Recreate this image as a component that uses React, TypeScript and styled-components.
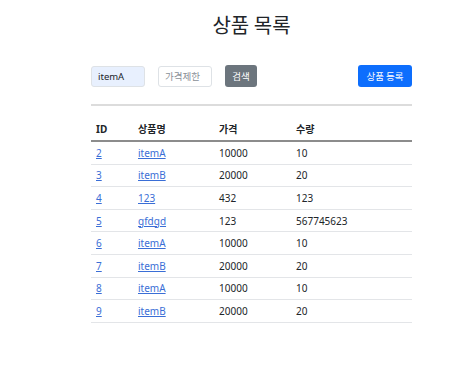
import React from "react";
import styled, { createGlobalStyle } from "styled-components";

const GlobalStyle = createGlobalStyle`
  body {
    margin: 0;
    background: #ffffff;
    font-family: "Noto Sans", "Noto Sans CJK KR", sans-serif;
    color: #212529;
  }
`;

const Page = styled.div`
  width: 321px;
  margin-left: 91px;
  padding-top: 8px;
`;

const Title = styled.h2`
  margin: 0;
  height: 34px;
  line-height: 34px;
  text-align: center;
  font-size: 20px;
  font-weight: 400;
  font-family: "Noto Sans CJK KR", sans-serif;
`;

const SearchBar = styled.form`
  display: flex;
  align-items: center;
  margin-top: 23px;
  height: 22px;
`;

const Field = styled.input<{ $filled?: boolean }>`
  box-sizing: border-box;
  width: 54px;
  height: 21px;
  margin-right: 13px;
  padding: 0 6px;
  border: 1px solid #dee2e6;
  border-radius: 3px;
  background: ${(p) => (p.$filled ? "#e8f0fe" : "#ffffff")};
  font-family: "Noto Sans", "Noto Sans CJK KR", sans-serif;
  font-size: 9.5px;
  color: #212529;
  outline: none;

  &::placeholder {
    color: #8a9097;
  }
`;

const Button = styled.button<{ $variant: "secondary" | "primary" }>`
  box-sizing: border-box;
  height: 22px;
  width: ${(p) => (p.$variant === "primary" ? "54px" : "32px")};
  padding: 0;
  border: none;
  border-radius: 3px;
  background: ${(p) => (p.$variant === "primary" ? "#0d6efd" : "#6c757d")};
  color: #ffffff;
  font-family: "Noto Sans CJK KR", sans-serif;
  font-size: 9.5px;
  margin-left: ${(p) => (p.$variant === "primary" ? "auto" : "0")};
`;

const Divider = styled.hr`
  margin: 17px 0 0;
  border: none;
  border-top: 2px solid #dcdcdc;
`;

const Table = styled.table`
  width: 100%;
  margin-top: 11px;
  border-collapse: collapse;
  table-layout: fixed;
  font-size: 10px;
`;

const Head = styled.th<{ $w: number }>`
  box-sizing: border-box;
  width: ${(p) => p.$w}px;
  height: 24px;
  padding: 0 5px;
  text-align: left;
  font-weight: 700;
  font-family: "Noto Sans", "Noto Sans CJK KR", sans-serif;
  border-bottom: 2px solid #8c8c8c;
`;

const Cell = styled.td`
  height: 21.6px;
  padding: 0 5px;
  border-bottom: 1px solid #e3e5e8;
`;

const ItemLink = styled.a`
  color: #3a6ed6;
  text-decoration: underline;
`;

const items = [
  { id: 2, name: "itemA", price: 10000, qty: 10 },
  { id: 3, name: "itemB", price: 20000, qty: 20 },
  { id: 4, name: "123", price: 432, qty: 123 },
  { id: 5, name: "gfdgd", price: 123, qty: 567745623 },
  { id: 6, name: "itemA", price: 10000, qty: 10 },
  { id: 7, name: "itemB", price: 20000, qty: 20 },
  { id: 8, name: "itemA", price: 10000, qty: 10 },
  { id: 9, name: "itemB", price: 20000, qty: 20 },
];

const App = () => {
  return (
    <>
      <GlobalStyle />
      <Page>
        <Title>상품 목록</Title>
        <SearchBar onSubmit={(e) => e.preventDefault()}>
          <Field $filled defaultValue="itemA" />
          <Field placeholder="가격제한" />
          <Button $variant="secondary" type="submit">
            검색
          </Button>
          <Button $variant="primary" type="button">
            상품 등록
          </Button>
        </SearchBar>
        <Divider />
        <Table>
          <thead>
            <tr>
              <Head $w={42}>ID</Head>
              <Head $w={81}>상품명</Head>
              <Head $w={77}>가격</Head>
              <Head $w={121}>수량</Head>
            </tr>
          </thead>
          <tbody>
            {items.map((item) => (
              <tr key={item.id}>
                <Cell>
                  <ItemLink href="#">{item.id}</ItemLink>
                </Cell>
                <Cell>
                  <ItemLink href="#">{item.name}</ItemLink>
                </Cell>
                <Cell>{item.price}</Cell>
                <Cell>{item.qty}</Cell>
              </tr>
            ))}
          </tbody>
        </Table>
      </Page>
    </>
  );
};

export default App;
